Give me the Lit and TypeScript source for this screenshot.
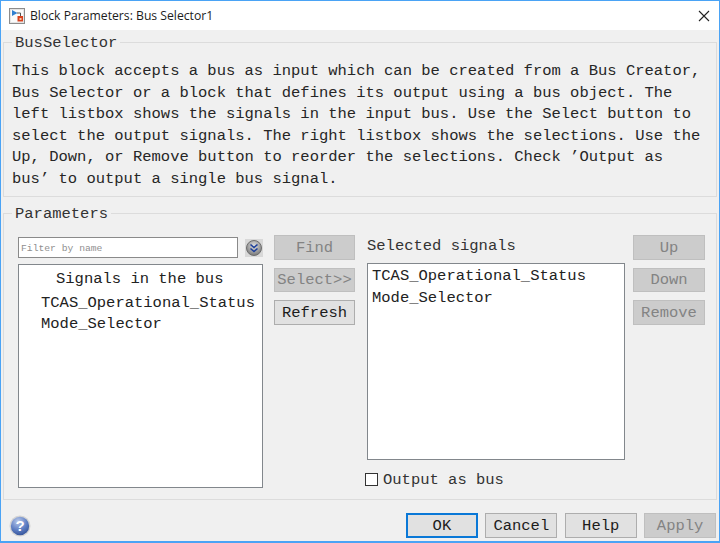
import { LitElement, css, html, svg } from "lit";
import { customElement } from "lit/decorators.js";

const DESCRIPTION = [
  "This block accepts a bus as input which can be created from a Bus Creator,",
  "Bus Selector or a block that defines its output using a bus object. The",
  "left listbox shows the signals in the input bus. Use the Select button to",
  "select the output signals. The right listbox shows the selections. Use the",
  "Up, Down, or Remove button to reorder the selections. Check \u2019Output as",
  "bus\u2019 to output a single bus signal.",
];

const SIGNALS = ["TCAS_Operational_Status", "Mode_Selector"];

const blockIcon = svg`
  <svg class="title-icon" width="16" height="16" viewBox="0 0 16 16">
    <rect x="0.5" y="0.5" width="15" height="15" fill="#e4e4e4" stroke="#8c8c8c" />
    <rect x="2" y="2" width="12" height="12" fill="#fafafa" />
    <path d="M3 2 L8.5 5 L3 8 Z" fill="#2f7fd0" />
    <path d="M8 5 H11.5 V8" fill="none" stroke="#555" />
    <rect x="8.5" y="8" width="5.5" height="5.5" fill="#d8401c" />
    <rect x="10.5" y="10" width="2" height="2" fill="#f5c9a8" />
  </svg>
`;

const closeIcon = svg`
  <svg width="12" height="12" viewBox="0 0 12 12">
    <path d="M1 1 L11 11 M11 1 L1 11" stroke="#222" stroke-width="1.1" fill="none" />
  </svg>
`;

const chevronIcon = svg`
  <svg width="18" height="18" viewBox="0 0 18 18">
    <defs>
      <radialGradient id="chev" cx="0.5" cy="0.35" r="0.7">
        <stop offset="0" stop-color="#e0e0e0" />
        <stop offset="1" stop-color="#707070" />
      </radialGradient>
    </defs>
    <rect x="0" y="0" width="18" height="18" fill="#d8d8d8" />
    <circle cx="9" cy="9" r="7.5" fill="url(#chev)" stroke="#6e6e6e" />
    <path d="M5.5 5.5 L9 8.5 L12.5 5.5 M5.5 9.5 L9 12.5 L12.5 9.5" stroke="#1d3f9a" stroke-width="1.6" fill="none" />
  </svg>
`;

const helpIcon = svg`
  <svg width="22" height="22" viewBox="0 0 22 22">
    <defs>
      <radialGradient id="ball" cx="0.4" cy="0.25" r="0.85">
        <stop offset="0" stop-color="#b9c9ea" />
        <stop offset="0.55" stop-color="#5f7fc4" />
        <stop offset="1" stop-color="#2c4a90" />
      </radialGradient>
    </defs>
    <circle cx="11" cy="11" r="10.5" fill="#d4d4d4" />
    <circle cx="11" cy="11" r="9.2" fill="url(#ball)" />
    <text x="11" y="16" text-anchor="middle" font-family="Liberation Sans, sans-serif" font-size="15" font-weight="700" fill="#fff">?</text>
  </svg>
`;

@customElement("app-root")
export class AppRoot extends LitElement {
  static styles = css`
    :host {
      display: flex;
      flex-direction: column;
      width: 720px;
      height: 543px;
      box-sizing: border-box;
      border: 1px solid #4aa3f5;
      border-bottom-width: 2px;
      background: #f0f0f0;
      color: #1c1c1c;
      font-family: "Liberation Mono", monospace;
      font-size: 15.5px;
      overflow: hidden;
    }

    .titlebar {
      display: flex;
      align-items: center;
      gap: 5px;
      height: 29px;
      flex: none;
      padding: 0 9px 0 8px;
      background: #fff;
      font-family: "Open Sans", sans-serif;
      font-size: 12.2px;
    }

    .title {
      flex: 1;
    }

    .close {
      display: flex;
    }

    .content {
      display: flex;
      flex-direction: column;
      flex: 1;
      padding: 0 2px;
    }

    fieldset {
      margin: 0;
      min-width: 0;
      border: 1px solid #dcdcdc;
      padding: 0;
    }

    legend {
      margin-left: 8px;
      padding: 2px 3px 0;
      line-height: 18px;
      color: #333;
    }

    .about {
      height: 165px;
      box-sizing: border-box;
      margin-top: 2px;
    }

    .about-text {
      padding: 9px 8px 0;
      line-height: 21.6px;
      white-space: pre;
      color: #262626;
    }

    .params {
      height: 297px;
      box-sizing: border-box;
      margin-top: 6px;
    }

    .params-body {
      display: flex;
      padding: 12px 0 0 14px;
    }

    .left {
      display: flex;
      flex-direction: column;
      width: 245px;
      padding-top: 2px;
    }

    .filter-row {
      display: flex;
      align-items: center;
      justify-content: space-between;
      height: 21px;
      margin-bottom: 6px;
    }

    .filter {
      display: flex;
      align-items: center;
      box-sizing: border-box;
      width: 220px;
      height: 21px;
      padding: 1px 0 0 2px;
      border: 1px solid #8a8a8a;
      background: #fff;
      color: #8f8f8f;
      font-size: 9.7px;
    }

    .chevron {
      display: flex;
    }

    .listbox {
      box-sizing: border-box;
      border: 1px solid #82878c;
      background: #fff;
      line-height: 21.6px;
      color: #222;
    }

    .source {
      height: 224px;
      padding: 4px 0 0 22px;
    }

    .source .heading {
      padding-left: 15px;
      margin-bottom: 2px;
    }

    .middle {
      display: flex;
      flex-direction: column;
      gap: 8px;
      margin-left: 11px;
      width: 81px;
    }

    .right {
      display: flex;
      flex-direction: column;
      width: 258px;
      margin-left: 12px;
    }

    .selected-label {
      height: 27px;
      padding-top: 1px;
      line-height: 21px;
      color: #333;
    }

    .target {
      height: 197px;
      padding: 2px 0 0 4px;
    }

    .output {
      display: flex;
      align-items: center;
      gap: 5px;
      margin: 9px 0 0 -2px;
      height: 21px;
      color: #333;
    }

    .checkbox {
      box-sizing: border-box;
      width: 13px;
      height: 13px;
      border: 1px solid #333;
      background: #fff;
    }

    .actions {
      display: flex;
      flex-direction: column;
      gap: 8px;
      margin-left: 8px;
      width: 72px;
    }

    .btn {
      display: flex;
      align-items: center;
      justify-content: center;
      box-sizing: border-box;
      height: 24.5px;
      padding-top: 1px;
      border: 1px solid #adadad;
      background: #e1e1e1;
      color: #1c1c1c;
    }

    .btn.disabled {
      border-color: #bfbfbf;
      background: #cccccc;
      color: #838383;
    }

    .btn.default {
      border: 2px solid #0a78d7;
    }

    .footer {
      display: flex;
      align-items: center;
      flex: 1;
      padding: 10px 1px 0 6px;
    }

    .help {
      display: flex;
      margin-right: auto;
    }

    .footer-buttons {
      display: flex;
      gap: 7.67px;
    }

    .footer-buttons .btn {
      width: 71.75px;
    }
  `;

  private renderList(items: string[]) {
    return items.map((item) => html`<div>${item}</div>`);
  }

  protected render() {
    return html`
      <div class="titlebar">
        ${blockIcon}
        <span class="title">Block Parameters: Bus Selector1</span>
        <span class="close">${closeIcon}</span>
      </div>
      <div class="content">
        <fieldset class="about">
          <legend>BusSelector</legend>
          <div class="about-text">${DESCRIPTION.join("\n")}</div>
        </fieldset>
        <fieldset class="params">
          <legend>Parameters</legend>
          <div class="params-body">
            <div class="left">
              <div class="filter-row">
                <div class="filter">Filter by name</div>
                <span class="chevron">${chevronIcon}</span>
              </div>
              <div class="listbox source">
                <div class="heading">Signals in the bus</div>
                ${this.renderList(SIGNALS)}
              </div>
            </div>
            <div class="middle">
              <div class="btn disabled">Find</div>
              <div class="btn disabled">Select&gt;&gt;</div>
              <div class="btn">Refresh</div>
            </div>
            <div class="right">
              <div class="selected-label">Selected signals</div>
              <div class="listbox target">${this.renderList(SIGNALS)}</div>
              <label class="output">
                <span class="checkbox"></span>
                <span>Output as bus</span>
              </label>
            </div>
            <div class="actions">
              <div class="btn disabled">Up</div>
              <div class="btn disabled">Down</div>
              <div class="btn disabled">Remove</div>
            </div>
          </div>
        </fieldset>
        <div class="footer">
          <span class="help">${helpIcon}</span>
          <div class="footer-buttons">
            <div class="btn default">OK</div>
            <div class="btn">Cancel</div>
            <div class="btn">Help</div>
            <div class="btn disabled">Apply</div>
          </div>
        </div>
      </div>
    `;
  }
}
